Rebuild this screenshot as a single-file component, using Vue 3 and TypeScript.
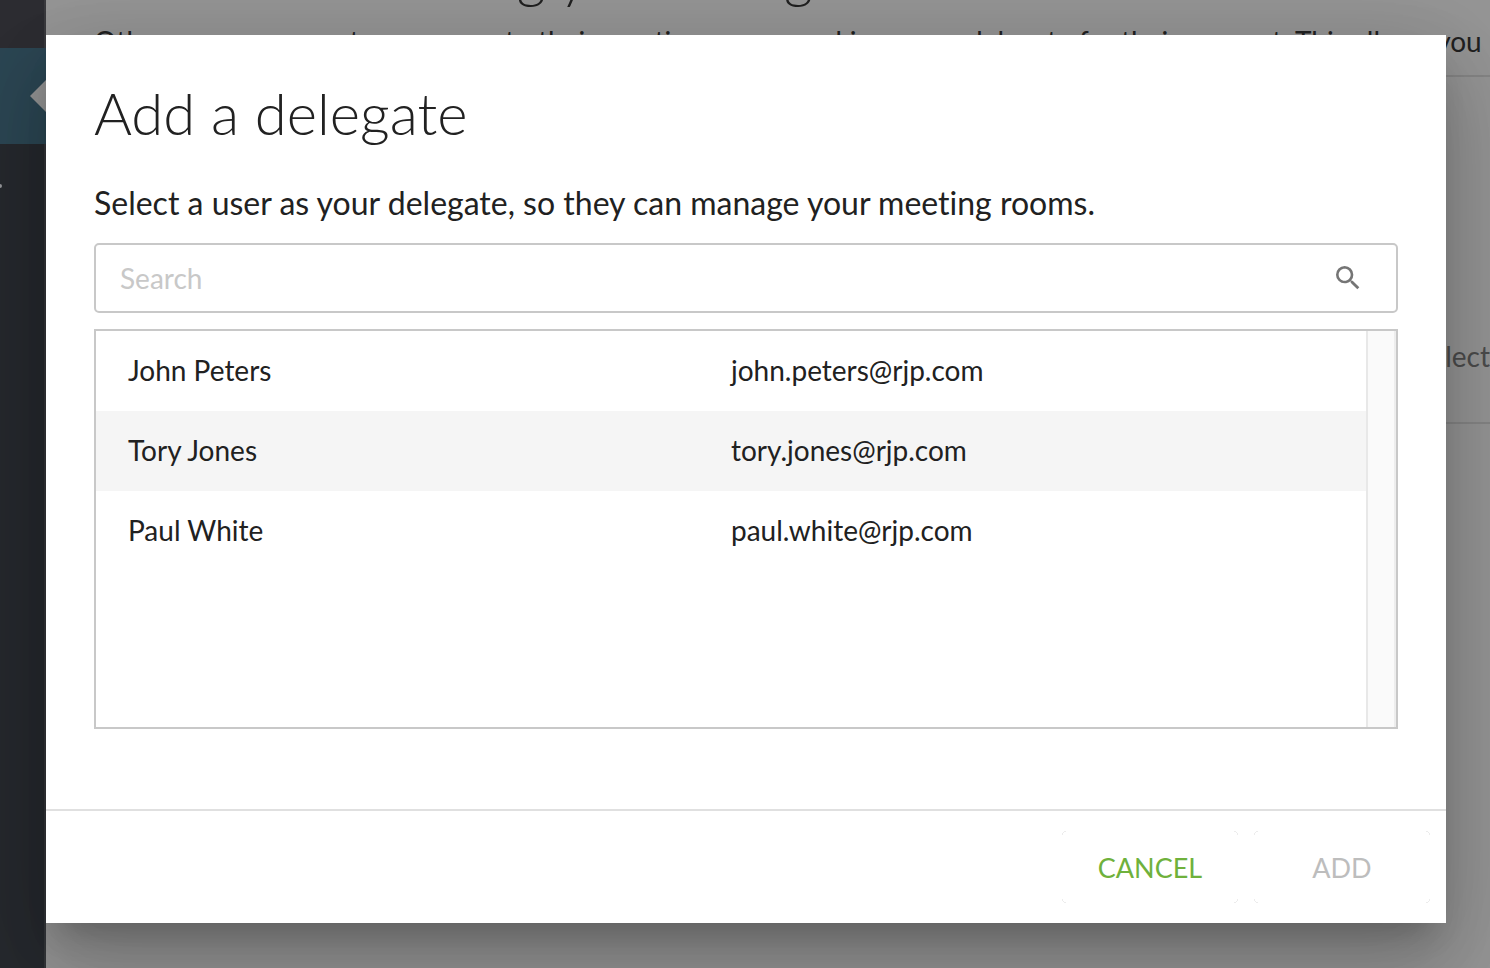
<script setup lang="ts">
import { computed, ref } from 'vue'

interface User {
  name: string
  email: string
}

const users: User[] = [
  { name: 'John Peters', email: 'john.peters@rjp.com' },
  { name: 'Tory Jones', email: 'tory.jones@rjp.com' },
  { name: 'Paul White', email: 'paul.white@rjp.com' },
]

const query = ref('')
const selected = ref<User | null>(null)

const matches = computed(() => {
  const q = query.value.trim().toLowerCase()
  return users.filter((u) => (u.name + ' ' + u.email).toLowerCase().includes(q))
})
</script>

<template>
  <div class="shell">
    <nav class="rail" aria-label="Main">
      <div class="rail-top"></div>
      <a class="rail-active" href="#" aria-label="Delegates"><span class="notch"></span></a>
      <div class="rail-rest"><span class="dot"></span></div>
    </nav>

    <main class="page">
      <h2 class="page-title">The users assisting your delegates</h2>
      <p class="page-intro">
        Other users can grant you access to their meeting rooms, making you a delegate for their account. This allows you
      </p>
      <section class="card">
        <p class="card-hint">Select</p>
      </section>
    </main>

    <div class="overlay">
      <form class="dialog" role="dialog" aria-modal="true" aria-labelledby="dialog-title" @submit.prevent>
        <div class="body">
          <h1 id="dialog-title" class="title">Add a delegate</h1>
          <label class="lead" for="user-search">Select a user as your delegate, so they can manage your meeting rooms.</label>
          <div class="search">
            <input id="user-search" v-model="query" type="text" placeholder="Search" autocomplete="off" />
            <svg class="glass" viewBox="0 0 24 24" aria-hidden="true">
              <path
                fill="currentColor"
                d="M15.5 14h-.79l-.28-.27A6.471 6.471 0 0 0 16 9.5 6.5 6.5 0 1 0 9.5 16c1.61 0 3.09-.59 4.23-1.57l.27.28v.79l5 4.99L20.49 19l-4.99-5zm-6 0C7.01 14 5 11.99 5 9.5S7.01 5 9.5 5 14 7.01 14 9.5 11.99 14 9.5 14z"
              />
            </svg>
          </div>
          <div class="list">
            <table class="users">
              <tbody>
                <tr v-for="u in matches" :key="u.email" :class="{ selected: selected === u }" @click="selected = u">
                  <td class="name">{{ u.name }}</td>
                  <td>{{ u.email }}</td>
                </tr>
              </tbody>
            </table>
            <div class="track"></div>
          </div>
        </div>
        <footer class="actions">
          <button type="button" class="btn cancel">CANCEL</button>
          <button type="submit" class="btn add" :disabled="!selected">ADD</button>
        </footer>
      </form>
    </div>
  </div>
</template>

<style>
body {
  margin: 0;
  background: #969696;
}
</style>

<style scoped>
.shell {
  position: relative;
  display: flex;
  min-height: 100vh;
  overflow: hidden;
  background: #969696;
  color: #212121;
  font-family: Lato, "Open Sans", sans-serif;
  font-variant-ligatures: none;
}
.rail {
  display: flex;
  flex-direction: column;
  flex: none;
  width: 46px;
}
.rail-top {
  box-sizing: border-box;
  height: 48px;
  background: #2d2d32;
  border-right: 2px solid #3a3a3e;
}
.rail-active {
  display: flex;
  align-items: center;
  justify-content: flex-end;
  height: 96px;
  background: #2c4754;
}
.notch {
  width: 16px;
  height: 32px;
  background: #969696;
  clip-path: polygon(100% 0, 0 50%, 100% 100%);
}
.rail-rest {
  flex: 1;
  padding-top: 40px;
  background: #26292e;
  border-right: 2px solid #34363a;
}
.dot {
  display: block;
  width: 2px;
  height: 4px;
  border-radius: 0 2px 2px 0;
  background: #97989b;
}
.page {
  flex: 1;
  min-width: 0;
}
.page-title {
  display: flex;
  align-items: flex-end;
  box-sizing: border-box;
  height: 24px;
  margin: 0;
  padding: 0 0 14px 48px;
  font-size: 56px;
  font-weight: 300;
  line-height: 68px;
  white-space: nowrap;
}
.page-intro {
  margin: 0;
  height: 51px;
  padding-left: 48px;
  font-size: 28px;
  line-height: 34px;
  white-space: nowrap;
}
.card {
  display: flex;
  align-items: center;
  justify-content: flex-end;
  height: 345px;
  border-top: 2px solid #868686;
  border-bottom: 2px solid #868686;
}
.card-hint {
  margin: 0;
  padding-top: 212px;
  color: #4c4c4c;
  font-size: 28px;
}
.overlay {
  position: absolute;
  inset: 0;
  display: flex;
  padding: 35px 44px 45px 46px;
}
.dialog {
  display: flex;
  flex: 1;
  flex-direction: column;
  min-width: 0;
  background: #fff;
  box-shadow:
    0 22px 30px -14px rgba(0, 0, 0, 0.2),
    0 48px 76px 6px rgba(0, 0, 0, 0.14),
    0 18px 92px 16px rgba(0, 0, 0, 0.12);
}
.body {
  display: flex;
  flex: 1;
  flex-direction: column;
  padding: 46px 48px 80px;
}
.title {
  margin: 0;
  font-size: 58px;
  font-weight: 300;
  line-height: 64px;
}
.lead {
  margin: 38px 0 20px;
  font-size: 32px;
  line-height: 40px;
}
.search {
  display: flex;
  align-items: center;
  height: 66px;
  padding: 0 32px 0 24px;
  border: 2px solid #c8c8c8;
  border-radius: 5px;
}
.search input {
  flex: 1;
  min-width: 0;
  padding: 0;
  border: 0;
  outline: 0;
  background: none;
  color: inherit;
  font: inherit;
  font-size: 28px;
}
.search input::placeholder {
  color: #c8c8c8;
  opacity: 1;
}
.glass {
  flex: none;
  width: 32px;
  height: 32px;
  color: #757575;
}
.list {
  display: flex;
  flex: 1;
  align-items: stretch;
  margin-top: 16px;
  border: 2px solid #c8c8c8;
}
.users {
  flex: 1;
  align-self: flex-start;
  border-collapse: collapse;
  table-layout: fixed;
}
.users tr:nth-child(even) {
  background: #f5f5f5;
}
.users tr.selected {
  background: #e3f1da;
}
.users td {
  box-sizing: border-box;
  width: 50%;
  height: 80px;
  padding: 0 0 2px;
  font-size: 28px;
}
.users .name {
  padding-left: 32px;
}
.track {
  flex: none;
  width: 26px;
  border-left: 2px solid #e8e8e8;
  border-right: 2px solid #ededed;
  background: #fafafa;
}
.actions {
  display: flex;
  justify-content: flex-end;
  gap: 16px;
  padding: 20px 16px;
  border-top: 2px solid #e0e0e0;
}
.btn {
  width: 176px;
  height: 72px;
  padding: 0;
  border: 0;
  background:
    radial-gradient(circle at 4px 4px, transparent 3px, #ececec 3px 4px, transparent 4px) left top / 4px 4px no-repeat,
    radial-gradient(circle at 0 4px, transparent 3px, #ececec 3px 4px, transparent 4px) right top / 4px 4px no-repeat,
    radial-gradient(circle at 4px 0, transparent 3px, #ececec 3px 4px, transparent 4px) left bottom / 4px 4px no-repeat,
    radial-gradient(circle at 0 0, transparent 3px, #ececec 3px 4px, transparent 4px) right bottom / 4px 4px no-repeat;
  font: inherit;
  font-size: 27px;
}
.cancel {
  color: #6fb13c;
}
.add {
  color: #212121;
}
.add:disabled {
  color: #bdbdbd;
}
</style>
